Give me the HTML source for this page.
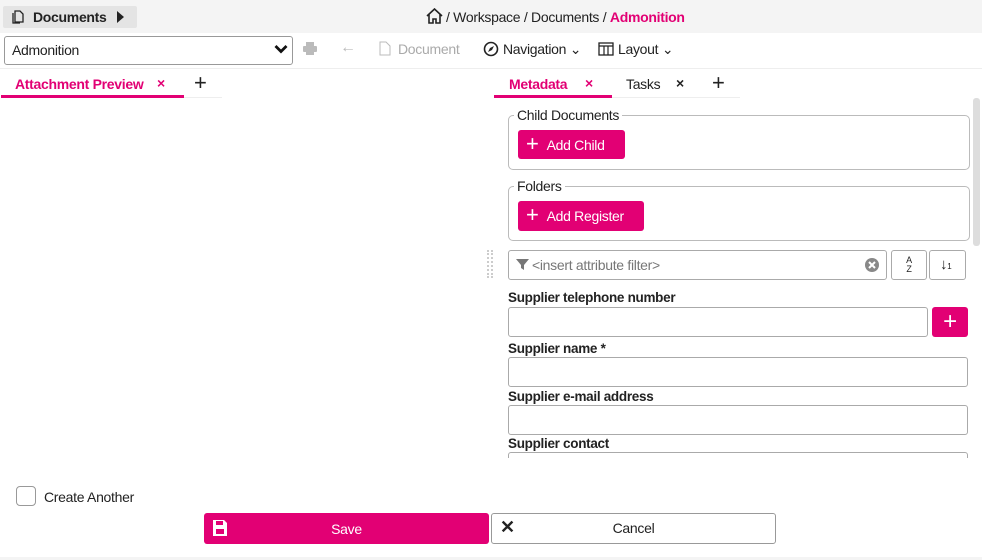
<!DOCTYPE html>
<html><head><style>
*{box-sizing:border-box;margin:0;padding:0}
body{width:982px;height:560px;background:#f4f4f4;font-family:"Liberation Sans",sans-serif;font-size:14px;color:#222;position:relative;overflow:hidden;letter-spacing:-0.3px}
.a{position:absolute}
.pink{color:#e20074}
.btn{position:absolute;background:#e20074;color:#fff;border-radius:3px;font-size:14px;display:flex;align-items:center}
.fs{position:absolute;border:1px solid #bbb;border-radius:5px}
.lg{position:absolute;background:#fff;padding:0 3px;font-size:14px;top:-9px;left:5px}
.inp{position:absolute;background:#fff;border:1px solid #aaa;border-radius:3px}
.lbl{position:absolute;font-weight:bold;font-size:13.5px}
</style></head><body>
<div class="a" style="left:3px;top:6px;width:134px;height:22px;background:#e4e4e4;border-radius:2px"></div>
<svg class="a" style="left:12px;top:10px" width="12" height="14" viewBox="0 0 12 14"><path d="M3 1h5l3 3v8H3z M1 3v10h7" fill="none" stroke="#222" stroke-width="1.3"/></svg>
<div class="a" style="left:33px;top:9px;font-weight:bold;font-size:14px">Documents</div>
<svg class="a" style="left:116px;top:11px" width="9" height="12"><path d="M1 0l7 6-7 6z" fill="#222"/></svg>
<svg class="a" style="left:426px;top:8px" width="17" height="16" viewBox="0 0 17 16"><path d="M1 8L8.5 1 16 8M3 6.5V15h4v-4h3v4h4V6.5" fill="none" stroke="#222" stroke-width="1.6"/></svg>
<div class="a" style="left:446px;top:9px">/ Workspace / Documents / <span class="pink" style="font-weight:bold">Admonition</span></div>
<div class="a" style="left:0;top:33px;width:982px;height:524px;background:#fff"></div>
<div class="a" style="left:4px;top:36px;width:289px;height:29px;border:1px solid #999;border-radius:3px;background:#fff"></div>
<div class="a" style="left:12px;top:42px">Admonition</div>
<svg class="a" style="left:274px;top:44px" width="14" height="10"><path d="M1.5 2l5.5 5.5L12.5 2" fill="none" stroke="#111" stroke-width="2.8"/></svg>
<svg class="a" style="left:302px;top:41px" width="16" height="15"><rect x="4" y="1" width="8" height="4" fill="#bbb"/><rect x="1" y="5" width="14" height="6" rx="1" fill="#bbb"/><rect x="4" y="9" width="8" height="5" fill="#bbb"/></svg>
<div class="a" style="left:340px;top:39px;color:#bbb;font-size:16px">←</div>
<svg class="a" style="left:379px;top:41px" width="12" height="15"><path d="M1 1h6l4 4v9H1z" fill="none" stroke="#bbb"/></svg>
<div class="a" style="left:398px;top:41px;color:#aaa">Document</div>
<svg class="a" style="left:483px;top:41px" width="16" height="16"><circle cx="8" cy="8" r="6.5" fill="none" stroke="#222" stroke-width="1.6"/><path d="M11 5L9 9 5 11 7 7z" fill="#222"/></svg>
<div class="a" style="left:503px;top:41px">Navigation ⌄</div>
<svg class="a" style="left:598px;top:42px" width="16" height="14"><rect x="1" y="1" width="14" height="12" fill="none" stroke="#222" stroke-width="1.3"/><path d="M1 4h14M6 4v9M10 4v9" stroke="#222" stroke-width="1.2"/></svg>
<div class="a" style="left:618px;top:41px">Layout ⌄</div>
<div class="a" style="left:0;top:68px;width:982px;height:1px;background:#eee"></div>
<div class="a pink" style="left:15px;top:76px;font-weight:bold">Attachment Preview</div>
<div class="a pink" style="left:157px;top:75px;font-weight:bold">×</div>
<div class="a" style="left:194px;top:70px;font-size:22px">+</div>
<div class="a" style="left:1px;top:95px;width:183px;height:3px;background:#e20074"></div>
<div class="a" style="left:184px;top:97px;width:38px;height:1px;background:#eee"></div>
<div class="a" style="left:487px;top:250px;width:6px;height:28px;border-left:2px dotted #ccc;border-right:2px dotted #ccc"></div>
<div class="a pink" style="left:509px;top:76px;font-weight:bold">Metadata</div>
<div class="a pink" style="left:585px;top:75px;font-weight:bold">×</div>
<div class="a" style="left:494px;top:95px;width:118px;height:3px;background:#e20074"></div>
<div class="a" style="left:612px;top:97px;width:128px;height:1px;background:#eee"></div>
<div class="a" style="left:626px;top:76px">Tasks</div>
<div class="a" style="left:676px;top:75px;font-weight:bold">×</div>
<div class="a" style="left:712px;top:70px;font-size:22px">+</div>
<div class="a" style="left:973px;top:98px;width:7px;height:148px;background:#ddd;border-radius:3px"></div>
<div class="fs" style="left:508px;top:115px;width:462px;height:55px"><div class="lg">Child Documents</div></div>
<div class="btn" style="left:518px;top:130px;width:107px;height:29px"><span style="font-size:22px;margin:0 8px 2px 8px">+</span>Add Child</div>
<div class="fs" style="left:508px;top:186px;width:462px;height:55px"><div class="lg">Folders</div></div>
<div class="btn" style="left:518px;top:201px;width:126px;height:30px"><span style="font-size:22px;margin:0 8px 2px 8px">+</span>Add Register</div>
<div class="inp" style="left:508px;top:250px;width:379px;height:30px"></div>
<svg class="a" style="left:516px;top:258px" width="13" height="13"><path d="M0 1h13L8 7v5L5 10V7z" fill="#777"/></svg>
<div class="a" style="left:532px;top:257px;color:#777">&lt;insert attribute filter&gt;</div>
<svg class="a" style="left:864px;top:257px" width="16" height="16"><circle cx="8" cy="8" r="7" fill="#888"/><path d="M5 5l6 6M11 5l-6 6" stroke="#fff" stroke-width="2"/></svg>
<div class="inp" style="left:891px;top:250px;width:36px;height:30px;font-size:9px;text-align:center;line-height:9px;padding-top:5px">A<br>Z</div>
<div class="inp" style="left:929px;top:250px;width:37px;height:30px;font-size:15px;padding:5px 0 0 10px">↓<span style="font-size:8px">1<br></span></div>
<div class="lbl" style="left:508px;top:290px">Supplier telephone number</div>
<div class="inp" style="left:508px;top:307px;width:420px;height:30px"></div>
<div class="btn" style="left:932px;top:307px;width:36px;height:30px;justify-content:center;font-size:24px">+</div>
<div class="lbl" style="left:508px;top:341px">Supplier name *</div>
<div class="inp" style="left:508px;top:357px;width:460px;height:30px"></div>
<div class="lbl" style="left:508px;top:389px">Supplier e-mail address</div>
<div class="inp" style="left:508px;top:405px;width:460px;height:30px"></div>
<div class="lbl" style="left:508px;top:436px">Supplier contact</div>
<div class="inp" style="left:508px;top:452px;width:460px;height:30px"></div>
<div class="a" style="left:494px;top:458px;width:488px;height:30px;background:#fff"></div>
<div class="a" style="left:16px;top:486px;width:20px;height:20px;border:1px solid #999;border-radius:4px"></div>
<div class="a" style="left:44px;top:489px">Create Another</div>
<div class="btn" style="left:204px;top:513px;width:285px;height:31px;justify-content:center">Save</div>
<svg class="a" style="left:213px;top:520px" width="14" height="16"><path d="M0 0h11l3 3v13H0z" fill="#fff"/><rect x="3" y="1" width="7" height="4" fill="#e20074"/><rect x="3" y="9" width="8" height="5" fill="#e20074"/></svg>
<div class="a" style="left:491px;top:513px;width:285px;height:31px;border:1px solid #999;border-radius:3px;background:#fff;text-align:center;line-height:29px">Cancel</div>
<div class="a" style="left:500px;top:517px;font-size:18px;font-weight:bold">✕</div>
</body></html>
